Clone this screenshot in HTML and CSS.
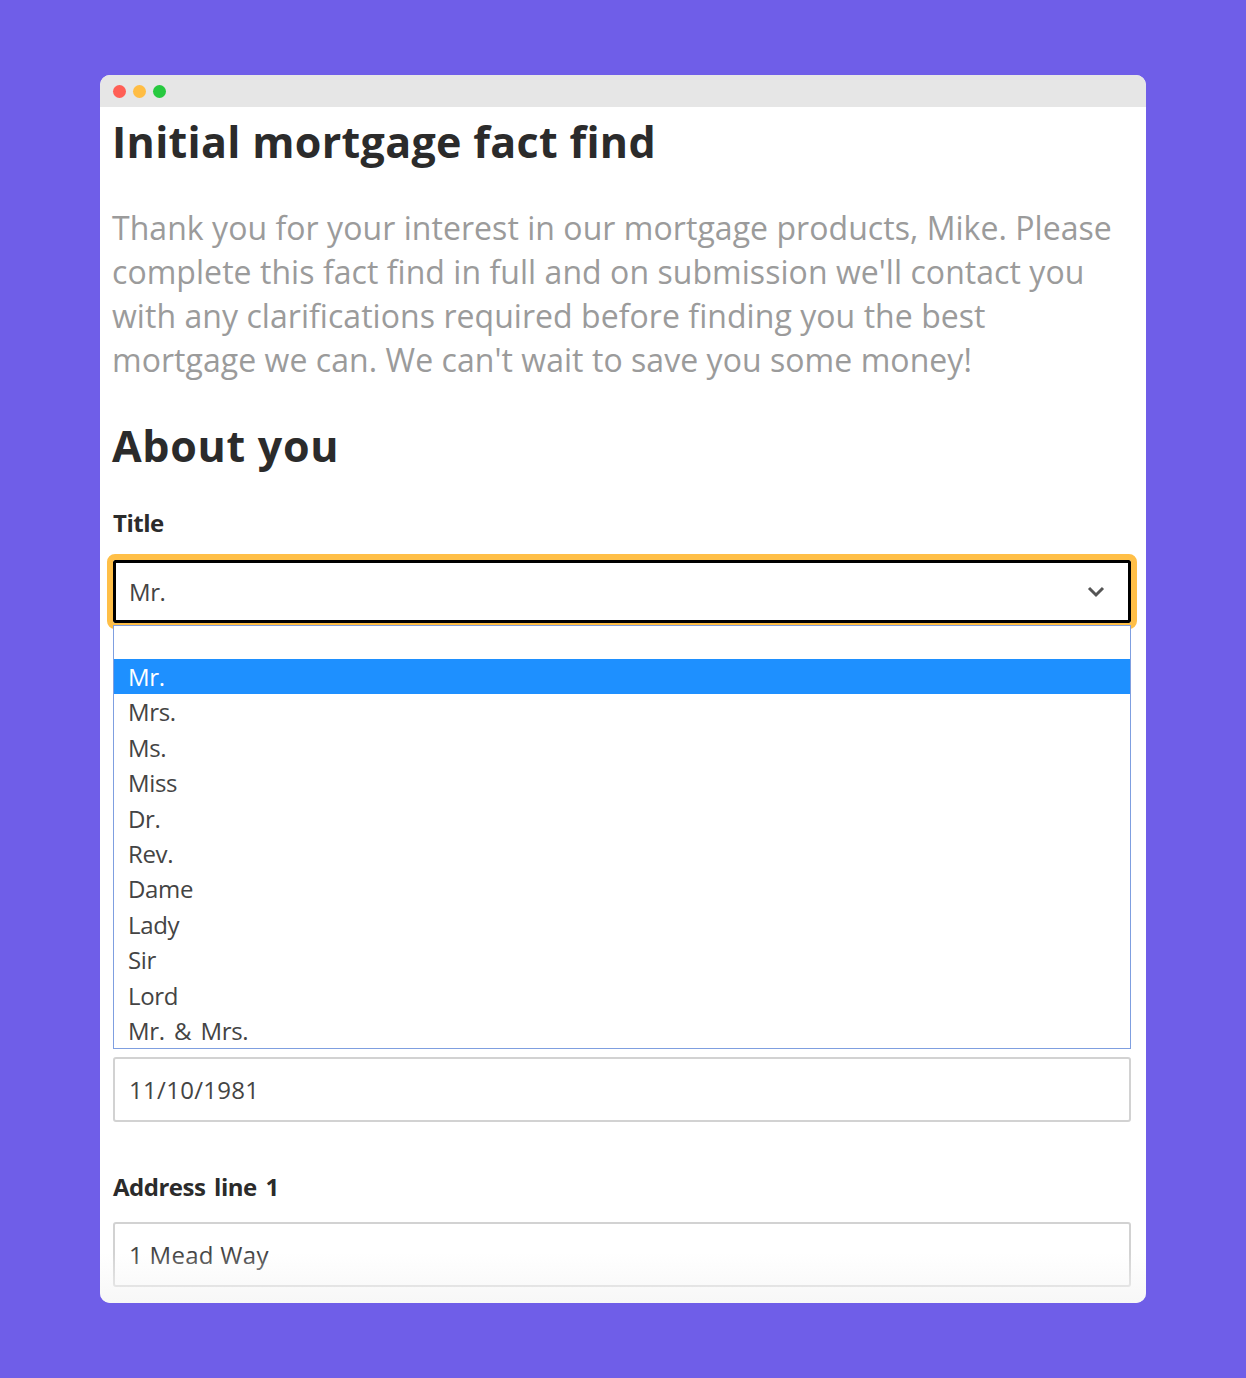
FILE: index.html
```html
<!DOCTYPE html>
<html lang="en">
<head>
  <meta charset="UTF-8">
  <title>Initial mortgage fact find</title>
  <link rel="stylesheet" href="styles.css">
</head>
<body>
  <div class="window">
    <div class="titlebar">
      <span class="dot red"></span>
      <span class="dot amber"></span>
      <span class="dot green"></span>
    </div>

    <div class="content">
      <h1>Initial mortgage fact find</h1>
      <p class="intro">Thank you for your interest in our mortgage products, Mike. Please complete this fact find in full and on submission we'll contact you with any clarifications required before finding you the best mortgage we can. We can't wait to save you some money!</p>

      <h2>About you</h2>

      <div class="field title-field">
        <div class="label">Title</div>
        <div class="select">
          <span>Mr.</span>
          <svg class="chevron" width="18" height="12" viewBox="0 0 18 12"><path d="M2 2 L9 9 L16 2" fill="none" stroke="#555" stroke-width="3"/></svg>
        </div>
        <ul class="options">
          <li class="blank"></li>
          <li class="selected">Mr.</li>
          <li>Mrs.</li>
          <li>Ms.</li>
          <li>Miss</li>
          <li>Dr.</li>
          <li>Rev.</li>
          <li>Dame</li>
          <li>Lady</li>
          <li>Sir</li>
          <li>Lord</li>
          <li>Mr. &amp; Mrs.</li>
        </ul>
      </div>

      <div class="field dob-field">
        <div class="input">11/10/1981</div>
      </div>

      <div class="field address-field">
        <div class="label">Address line 1</div>
        <div class="input">1 Mead Way</div>
      </div>
    </div>

    <div class="fade"></div>
  </div>
</body>
</html>
```

FILE: styles.css
```css
* {
  box-sizing: border-box;
}

body {
  margin: 0;
  height: 1378px;
  padding: 75px 100px;
  background: #6f5ee8;
  font-family: "Open Sans", "Noto Sans", sans-serif;
  color: #2b2b2b;
  overflow: hidden;
}

.window {
  position: relative;
  height: 1228px;
  background: #fff;
  border-radius: 10px;
  overflow: hidden;
}

.titlebar {
  display: flex;
  align-items: center;
  gap: 6.67px;
  height: 32px;
  padding: 1px 13px 0;
  background: #e6e6e6;
}

.dot {
  width: 13.33px;
  height: 13.33px;
  border-radius: 50%;
}

.red { background: #ff5f56; }
.amber { background: #ffbd44; }
.green { background: #27c93f; }

.content {
  padding: 0 15px 0 13px;
}

h1 {
  margin: 6px 0 0 -1px;
  font-size: 43px;
  line-height: 58px;
  font-weight: 700;
  letter-spacing: 0.32px;
}

.intro {
  margin: 35px 0 0 -1px;
  font-size: 32px;
  line-height: 44px;
  letter-spacing: 0.05px;
  color: #9b9b9b;
}

h2 {
  margin: 35px 0 0 -1px;
  font-size: 43px;
  line-height: 58px;
  font-weight: 700;
  letter-spacing: 0.7px;
}

.field {
  position: relative;
}

.title-field {
  margin-top: 31px;
}

.label {
  font-size: 24px;
  line-height: 33px;
  font-weight: 700;
  letter-spacing: -0.5px;
  word-spacing: 3px;
}

.select {
  display: flex;
  align-items: center;
  justify-content: space-between;
  height: 63px;
  margin-top: 21px;
  padding: 0 23px 0 13px;
  background: #fff;
  border: 3px solid #000;
  border-radius: 2px;
  outline: 6px solid #ffbf47;
  outline-offset: 0;
  font-size: 24px;
  letter-spacing: -0.4px;
  color: #444;
}

/* open list sits over the fields below it */
.options {
  position: absolute;
  z-index: 2;
  left: 0;
  right: 0;
  top: 119px;
  margin: 0;
  padding: 0;
  list-style: none;
  height: 424px;
  background: #fff;
  border: 1px solid #7f9fe0;
  font-size: 24px;
  letter-spacing: -0.35px;
  word-spacing: 3.5px;
  color: #444;
  overflow: hidden;
}

.options li {
  height: 35.4px;
  line-height: 35.4px;
  padding-left: 14px;
}

.options .blank {
  height: 33px;
}

.options .selected {
  background: #1e90ff;
  color: #fff;
}

.dob-field {
  margin-top: 434px;
}

.address-field {
  margin-top: 48px;
}

.input {
  display: flex;
  align-items: center;
  height: 65px;
  padding-left: 14px;
  background: #fff;
  border: 2px solid #d2d2d2;
  border-radius: 3px;
  font-size: 24px;
  letter-spacing: 0.3px;
  color: #444;
}

.label + .input {
  margin-top: 19px;
}

.fade {
  position: absolute;
  left: 0;
  right: 0;
  bottom: 0;
  height: 50px;
  background: linear-gradient(rgba(245, 245, 245, 0), rgba(245, 245, 245, 0.8));
  pointer-events: none;
}
```
